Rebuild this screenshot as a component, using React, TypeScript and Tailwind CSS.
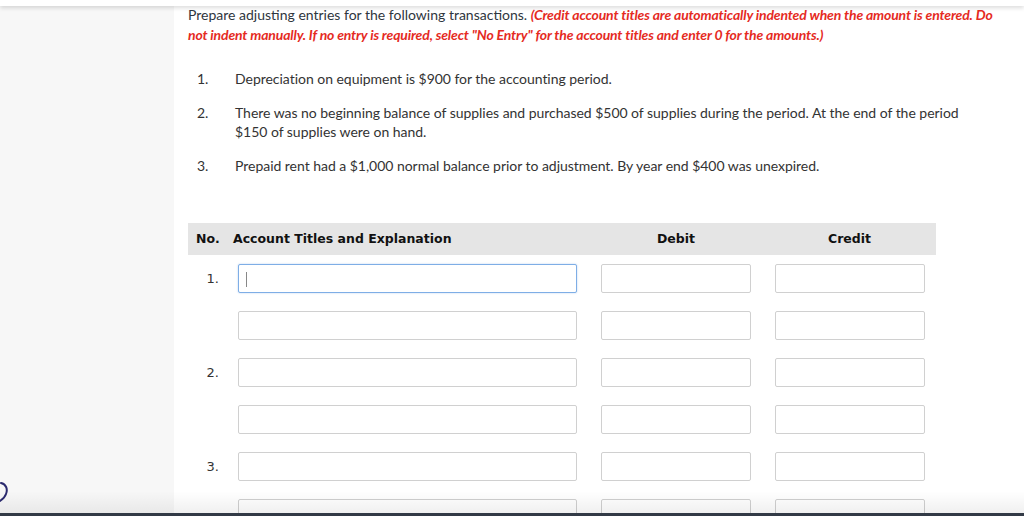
import React from "react";

const items = [
  "Depreciation on equipment is $900 for the accounting period.",
  "There was no beginning balance of supplies and purchased $500 of supplies during the period. At the end of the period $150 of supplies were on hand.",
  "Prepaid rent had a $1,000 normal balance prior to adjustment. By year end $400 was unexpired.",
];

// 6 rows, numbers only on every other one
const rows = ["1.", "", "2.", "", "3.", ""];

const App = () => {
  return (
    <div className="relative w-[1024px] h-[516px] overflow-hidden bg-white flex flex-col font-['Lato','Liberation_Sans',sans-serif]">
      {/* top bar */}
      <div className="relative z-10 h-[6px] shrink-0 bg-white shadow-[0_2px_4px_rgba(0,0,0,0.14)]" />

      <div className="flex flex-1 min-h-0">
        {/* left gutter */}
        <div className="w-[174px] shrink-0 bg-[#f7f7f7]" />

        {/* content */}
        <div className="flex-1 pl-[14px] -mt-[1px]">
          <p className="text-[14px] leading-[20px] text-[#2f3640] w-[820px]">
            Prepare adjusting entries for the following transactions.{" "}
            <span className="italic font-bold text-[#e52b1f] tracking-[-0.16px]">
              (Credit account titles are automatically indented when the amount is entered. Do not indent manually. If no entry is required, select "No Entry" for the account titles and enter 0 for the amounts.)
            </span>
          </p>

          <ol className="mt-[24px] flex flex-col gap-[15px] w-[790px]">
            {items.map((text, i) => (
              <li key={i} className="flex text-[14px] leading-[19px] text-[#333] tracking-[-0.03px]">
                <span className="w-[47px] shrink-0 pl-[9px]">{i + 1}.</span>
                <span>{text}</span>
              </li>
            ))}
          </ol>

          {/* journal table */}
          <div className="mt-[48px] w-[748px] font-['DejaVu_Sans','Verdana',sans-serif]">
            <div className="flex h-[32px] items-center bg-[#e5e5e5] text-[12.5px] font-bold text-[#111]">
              <div className="w-[45px] pl-[8px]">No.</div>
              <div className="w-[356px]">Account Titles and Explanation</div>
              <div className="w-[174px] text-center">Debit</div>
              <div className="w-[173px] text-center">Credit</div>
            </div>

            <div className="flex flex-col gap-[18px] pt-[9px]">
              {rows.map((num, i) => (
                <div key={i} className="flex h-[29px] items-center">
                  <div className="w-[31px] text-right text-[13px] text-[#333]">{num}</div>
                  <div className="w-[370px] pl-[19px]">
                    {i === 0 ? (
                      <div className="relative h-[29px] w-[339px] rounded-[2px] border border-[#7eaee6] bg-white shadow-[0_0_2px_rgba(80,140,220,0.4)]">
                        <div className="absolute left-[7px] top-[7px] h-[15px] w-[1px] bg-[#888]" />
                      </div>
                    ) : (
                      <div className="h-[29px] w-[339px] rounded-[2px] border border-[#d0d0d0] bg-white" />
                    )}
                  </div>
                  <div className="w-[174px] pl-[12px]">
                    <div className="h-[29px] w-[150px] rounded-[2px] border border-[#d0d0d0] bg-white" />
                  </div>
                  <div className="w-[173px] pl-[12px]">
                    <div className="h-[29px] w-[150px] rounded-[2px] border border-[#d0d0d0] bg-white" />
                  </div>
                </div>
              ))}
            </div>
          </div>
        </div>
      </div>

      {/* bottom fade + dark strip */}
      <div className="pointer-events-none absolute left-0 right-0 bottom-[3px] h-[22px] bg-gradient-to-b from-transparent to-[rgba(0,0,0,0.06)]" />
      <div className="relative z-10 h-[3px] shrink-0 bg-[#323a46]" />

      {/* pen mark at left edge */}
      <svg className="absolute left-0 top-[481px]" width="12" height="22" viewBox="0 0 12 22">
        <path d="M1 2 C6 3 8 8 6 13 C5 16 3 18 0 20" fill="none" stroke="#2b2a6e" strokeWidth="2" strokeLinecap="round" />
      </svg>
    </div>
  );
};

export default App;
